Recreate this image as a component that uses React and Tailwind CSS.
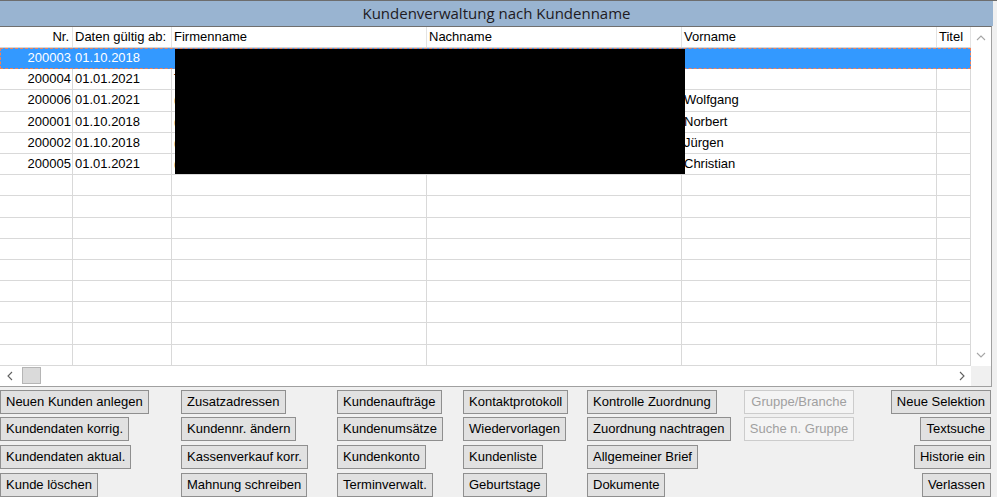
import React from "react";

const ROWS = [
  { nr: "200003", date: "01.10.2018", firma: "", vorname: "", selected: true },
  { nr: "200004", date: "01.01.2021", firma: "T", vorname: "" },
  { nr: "200006", date: "01.01.2021", firma: "(", vorname: "Wolfgang" },
  { nr: "200001", date: "01.10.2018", firma: "(", vorname: "Norbert" },
  { nr: "200002", date: "01.10.2018", firma: "(", vorname: "Jürgen" },
  { nr: "200005", date: "01.01.2021", firma: "(", vorname: "Christian" },
];
const EMPTY_ROWS = 9;

const BUTTONS = [
  ["Neuen Kunden anlegen", "Zusatzadressen", "Kundenaufträge", "Kontaktprotokoll", "Kontrolle Zuordnung", "Gruppe/Branche", "Neue Selektion"],
  ["Kundendaten korrig.", "Kundennr. ändern", "Kundenumsätze", "Wiedervorlagen", "Zuordnung nachtragen", "Suche n. Gruppe", "Textsuche"],
  ["Kundendaten aktual.", "Kassenverkauf korr.", "Kundenkonto", "Kundenliste", "Allgemeiner Brief", null, "Historie ein"],
  ["Kunde löschen", "Mahnung schreiben", "Terminverwalt.", "Geburtstage", "Dokumente", null, "Verlassen"],
];

const Chevron = ({ dir, color = "#606060" }) => {
  const points = {
    up: "1,6 5,2 9,6",
    down: "1,2 5,6 9,2",
    left: "6,1 2,5 6,9",
    right: "3,1 7,5 3,9",
  }[dir];
  const vertical = dir === "up" || dir === "down";
  return (
    <svg
      width={vertical ? 10 : 9}
      height={vertical ? 8 : 10}
      viewBox={vertical ? "0 0 10 8" : "0 0 9 10"}
      fill="none"
    >
      <polyline points={points} stroke={color} strokeWidth="1.1" />
    </svg>
  );
};

const GridRow = ({ row }) => {
  const sel = row?.selected;
  const cell = sel
    ? "h-full shrink-0 overflow-hidden whitespace-nowrap border-r border-[#3399ff] bg-[#3399ff] text-white"
    : "h-full shrink-0 overflow-hidden whitespace-nowrap border-r border-[#d9d9d9] bg-white text-black";
  return (
    <div
      className={`flex h-[21.2px] leading-[20px] border-b ${
        sel
          ? "border-[#3399ff] outline-1 outline-dashed outline-[#f0805a] -outline-offset-1"
          : "border-[#d9d9d9]"
      }`}
    >
      <div className={`${cell} w-[73px] text-right pr-[1px]`}>{row?.nr}</div>
      <div className={`${cell} w-[99px] pl-[2px]`}>{row?.date}</div>
      <div className={`${cell} w-[255px] pl-[2px] text-[#555]`}>{row?.firma}</div>
      <div className={`${cell} w-[255px] pl-[2px]`}></div>
      <div className={`${cell} w-[255px] pl-[2px] ${sel ? "border-[#2a2a2a]" : ""}`}>{row?.vorname}</div>
      <div className={`${cell} w-[34px] pl-[2px]`}></div>
    </div>
  );
};

const WinButton = ({ label, col }) => {
  if (!label) return <div />;
  if (col === 5) {
    return (
      <button className="h-[24px] w-[110px] justify-self-start border border-[#cccccc] bg-[#f4f4f4] text-center leading-[22px] text-[#a0a0a0] whitespace-nowrap">
        {label}
      </button>
    );
  }
  return (
    <button
      className={`h-[24px] border border-[#8f8f8f] bg-[#e1e1e1] px-[5px] leading-[22px] text-black whitespace-nowrap ${
        col === 6 ? "justify-self-end" : "justify-self-start"
      }`}
    >
      {label}
    </button>
  );
};

const App = () => {
  const rows = [...ROWS, ...Array.from({ length: EMPTY_ROWS }, () => null)];

  return (
    <div className="relative w-[997px] h-[497px] overflow-hidden bg-[#f0f0f0] font-['Liberation_Sans',Arial,sans-serif] text-[13px]">
      <div className="h-px w-full bg-[#6d6d6d]" />

      {/* Title band */}
      <div className="flex h-[25px] w-[993px] items-center justify-center bg-[#99b4d1] font-['Open_Sans',sans-serif] text-[15px] text-[#1e1a22]">
        Kundenverwaltung nach Kundenname
      </div>

      {/* Grid */}
      <div className="w-[992px] border-t border-b border-r border-t-[#6f6f6f] border-b-[#a0a0a0] border-r-[#a0a0a0]">
        <div className="flex">
          <div className="w-[971px]">
            {/* Header */}
            <div className="flex h-[21px] leading-[20px] border-b border-[#d5d5d5] bg-white">
              <div className="w-[73px] shrink-0 border-r border-[#e3e3e3] pr-[3px] text-right">Nr.</div>
              <div className="w-[99px] shrink-0 border-r border-[#e3e3e3] pl-[2px] whitespace-nowrap">Daten gültig ab:</div>
              <div className="w-[255px] shrink-0 border-r border-[#e3e3e3] pl-[2px]">Firmenname</div>
              <div className="w-[255px] shrink-0 border-r border-[#e3e3e3] pl-[2px]">Nachname</div>
              <div className="w-[255px] shrink-0 border-r border-[#e3e3e3] pl-[2px]">Vorname</div>
              <div className="w-[34px] shrink-0 border-r border-[#e3e3e3] pl-[2px]">Titel</div>
            </div>
            {rows.map((row, i) => (
              <GridRow key={i} row={row} />
            ))}
          </div>

          {/* Vertical scrollbar */}
          <div className="flex w-[20px] flex-col justify-between bg-white">
            <div className="flex h-[21px] items-center justify-center">
              <Chevron dir="up" color="#a6a6a6" />
            </div>
            <div className="flex h-[21px] items-center justify-center">
              <Chevron dir="down" color="#a6a6a6" />
            </div>
          </div>
        </div>

        {/* Horizontal scrollbar */}
        <div className="flex h-[20px]">
          <div className="flex w-[971px] items-center bg-white">
            <div className="flex h-full w-[20px] items-center justify-center">
              <Chevron dir="left" />
            </div>
            <div className="ml-[2px] h-[17px] w-[19px] border border-[#b5b5b5] bg-[#dadada]" />
            <div className="flex-1" />
            <div className="flex h-full w-[20px] items-center justify-center">
              <Chevron dir="right" />
            </div>
          </div>
          <div className="w-[20px] bg-[#f0f0f0]" />
        </div>
      </div>

      {/* Buttons */}
      <div className="grid w-[991px] grid-cols-[181px_156px_126px_124px_157px_110px_1fr] gap-y-[3.67px] pt-[3px]">
        {BUTTONS.map((line, r) =>
          line.map((label, c) => <WinButton key={`${r}-${c}`} label={label} col={c} />)
        )}
      </div>

      {/* Redacted area */}
      <div className="absolute left-[175px] top-[49px] h-[125px] w-[510px] bg-black" />
    </div>
  );
};

export default App;
